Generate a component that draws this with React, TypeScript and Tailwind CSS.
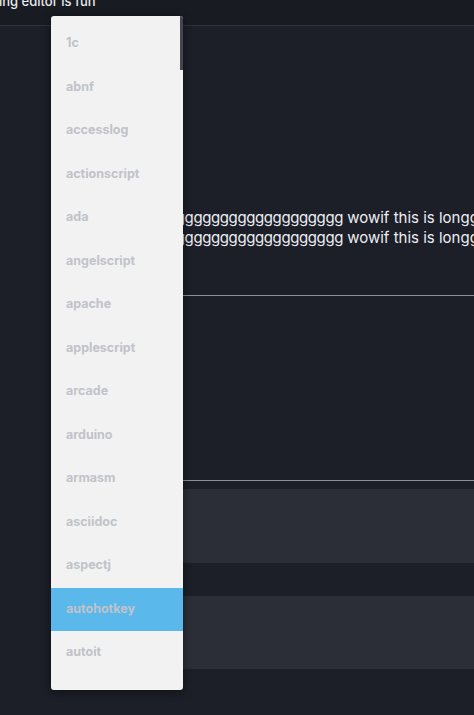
import React from 'react';

const languages = [
  '1c',
  'abnf',
  'accesslog',
  'actionscript',
  'ada',
  'angelscript',
  'apache',
  'applescript',
  'arcade',
  'arduino',
  'armasm',
  'asciidoc',
  'aspectj',
  'autohotkey',
  'autoit',
];

const selected = 'autohotkey';

// the long word overflows to the left, under the dropdown
const LongLine = () => (
  <div className="flex h-[20px] items-center whitespace-nowrap">
    <div className="flex w-[283px] shrink-0 justify-end overflow-hidden">
      <span className="tracking-[-0.4px]">gggggggggggggggggggggggggggggggggggggggg</span>
    </div>
    <span className="whitespace-pre"> wowif this is longgggggggggggggggggggg</span>
  </div>
);

export default function App() {
  return (
    <div
      className="relative h-[715px] w-full overflow-hidden bg-[#1c1f28] text-white"
      style={{ fontFamily: 'Inter, "Noto Sans", sans-serif' }}
    >
      {/* top bar, page scrolled so the title is cut */}
      <div className="h-[26px] overflow-hidden border-b border-[#2e323b] bg-[#181b22]">
        <div className="-ml-[1px] -mt-[7px] text-[13px] font-medium leading-[16px] text-[#e9eaee]">ing editor is fun</div>
      </div>

      {/* editor content */}
      <div className="flex flex-col pl-[60px]">
        <div className="mt-[182px] text-[15px] text-[#eceef2]">
          <LongLine />
          <LongLine />
        </div>
        <div className="mt-[47px] h-px bg-[#8d9097]" />
        <div className="h-[184px]" />
        <div className="h-px bg-[#8d9097]" />
        <div className="mt-[8px] h-[74px] bg-[#2b2e37]" />
        <div className="mt-[33px] h-[73px] bg-[#2b2e37]" />
      </div>

      {/* language dropdown */}
      <div className="absolute left-[51px] top-[16px] h-[674px] w-[132px] overflow-hidden rounded-[3px] bg-[#f2f2f2] shadow-[0_2px_10px_rgba(0,0,0,0.45)]">
        <div className="absolute right-0 top-0 h-[54px] w-[3px] bg-[#43464e]" />
        <ul className="pt-[6px]">
          {languages.map((lang) => (
            <li
              key={lang}
              className={`flex h-[43.5px] items-center px-[15px] text-[12.5px] font-bold text-[#c1c3c9] ${
                lang === selected ? 'bg-[#5ab8eb]' : ''
              }`}
            >
              {lang}
            </li>
          ))}
        </ul>
      </div>
    </div>
  );
}
